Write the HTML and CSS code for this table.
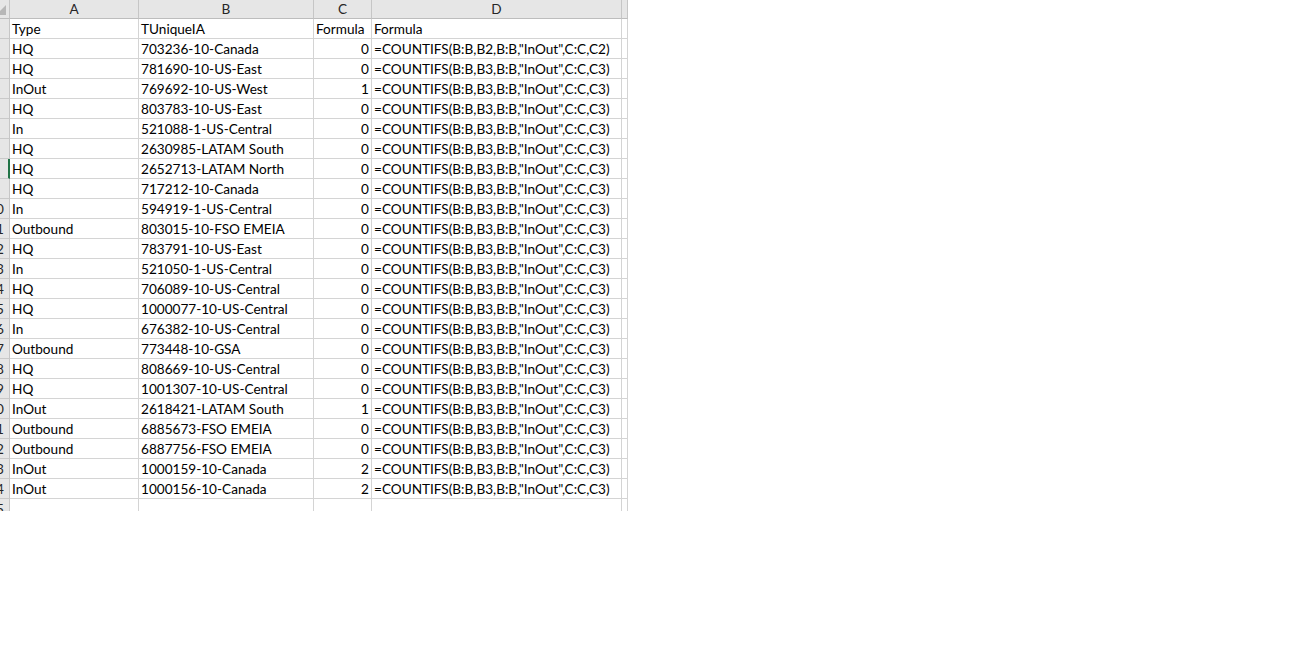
FILE: index.html
```html
<!DOCTYPE html>
<html>
<head>
<meta charset="utf-8">
<link rel="stylesheet" href="styles.css">
</head>
<body>
<div class="sheet">
  <div class="grid">
    <div class="hd corner"><span class="tri"></span></div>
    <div class="hd col">A</div>
    <div class="hd col">B</div>
    <div class="hd col">C</div>
    <div class="hd col">D</div>
    <div class="hd col extra"></div>
  </div>
  <div class="grid body" id="body"></div>
</div>
<script src="app.js"></script>
</body>
</html>
```

FILE: styles.css
```css
html, body {
  margin: 0;
  padding: 0;
  background: #ffffff;
}
body {
  font-family: Lato, "Liberation Sans", sans-serif;
  font-size: 13.6px;
  color: #000;
}
.sheet {
  width: 628px;
  height: 511px;
  overflow: hidden;
}
.grid {
  display: grid;
  grid-template-columns: 10px 129px 175px 58px 250px 6px;
}
.grid > div {
  box-sizing: border-box;
  border-right: 1px solid #d4d4d4;
  border-bottom: 1px solid #d4d4d4;
  height: 20px;
  line-height: 19px;
  padding-top: 1px;
  white-space: nowrap;
  overflow: hidden;
}
.grid > .hd {
  height: 19px;
  line-height: 18px;
  padding-top: 0;
  background: #e6e6e6;
  border-right: 1px solid #c6c6c6;
  border-bottom: 1px solid #bdbdbd;
  color: #262626;
  text-align: center;
}
.corner {
  position: relative;
}
.tri {
  position: absolute;
  right: 3px;
  bottom: 3px;
  width: 0;
  height: 0;
  border-left: 10px solid transparent;
  border-bottom: 10px solid #b7b7b7;
}
.grid > .rh {
  background: #e6e6e6;
  border-right: 1px solid #c6c6c6;
  border-bottom: 1px solid #c9c9c9;
  display: flex;
  justify-content: flex-end;
  color: #262626;
}
.rh span {
  flex: 0 0 26px;
  width: 26px;
  text-align: center;
}
.grid > .rh.sel {
  border-right: 2px solid #217346;
}
.txt {
  padding-left: 2px;
}
.num {
  text-align: right;
  padding-right: 2px;
}
.frm {
  padding-left: 2px;
}
```

FILE: app.js
```js
var rows = [
  ["Type","TUniqueIA","Formula","Formula"],
  ["HQ","703236-10-Canada","0",'=COUNTIFS(B:B,B2,B:B,"InOut",C:C,C2)'],
  ["HQ","781690-10-US-East","0",null],
  ["InOut","769692-10-US-West","1",null],
  ["HQ","803783-10-US-East","0",null],
  ["In","521088-1-US-Central","0",null],
  ["HQ","2630985-LATAM South","0",null],
  ["HQ","2652713-LATAM North","0",null],
  ["HQ","717212-10-Canada","0",null],
  ["In","594919-1-US-Central","0",null],
  ["Outbound","803015-10-FSO EMEIA","0",null],
  ["HQ","783791-10-US-East","0",null],
  ["In","521050-1-US-Central","0",null],
  ["HQ","706089-10-US-Central","0",null],
  ["HQ","1000077-10-US-Central","0",null],
  ["In","676382-10-US-Central","0",null],
  ["Outbound","773448-10-GSA","0",null],
  ["HQ","808669-10-US-Central","0",null],
  ["HQ","1001307-10-US-Central","0",null],
  ["InOut","2618421-LATAM South","1",null],
  ["Outbound","6885673-FSO EMEIA","0",null],
  ["Outbound","6887756-FSO EMEIA","0",null],
  ["InOut","1000159-10-Canada","2",null],
  ["InOut","1000156-10-Canada","2",null],
  ["","","",""]
];
var def = '=COUNTIFS(B:B,B3,B:B,"InOut",C:C,C3)';
var body = document.getElementById('body');
function cell(cls, text) {
  var d = document.createElement('div');
  d.className = cls;
  d.textContent = text;
  body.appendChild(d);
  return d;
}
rows.forEach(function (r, i) {
  var n = i + 1;
  var rh = cell('rh' + (n === 8 ? ' sel' : ''), '');
  var s = document.createElement('span');
  s.textContent = String(n);
  rh.appendChild(s);
  cell('txt', r[0]);
  cell('txt', r[1]);
  cell(i === 0 ? 'txt' : 'num', r[2]);
  cell('frm', r[3] === null ? def : r[3]);
  cell('ext', '');
});
```
